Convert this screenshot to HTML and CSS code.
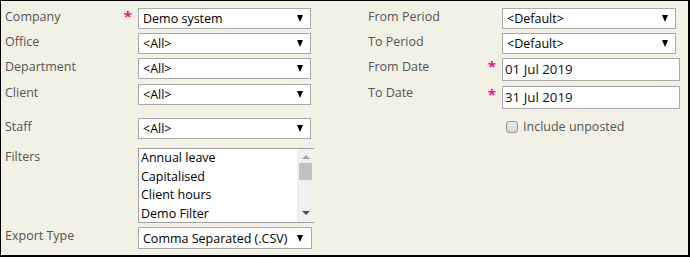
FILE: index.html
```html
<!DOCTYPE html>
<html>
<head>
<meta charset="utf-8">
<link rel="stylesheet" href="styles.css">
</head>
<body>
<div class="panel">
  <div class="form">
    <div class="lbl">Company</div><div class="req">*</div>
    <div class="sel"><span class="val">Demo system</span><span class="arr"></span></div>
    <div class="gap"></div>
    <div class="lbl">From Period</div><div class="req"></div>
    <div class="sel sel-r"><span class="val">&lt;Default&gt;</span><span class="arr"></span></div>

    <div class="lbl">Office</div><div class="req"></div>
    <div class="sel"><span class="val">&lt;All&gt;</span><span class="arr"></span></div>
    <div class="gap"></div>
    <div class="lbl">To Period</div><div class="req"></div>
    <div class="sel sel-r"><span class="val">&lt;Default&gt;</span><span class="arr"></span></div>

    <div class="lbl">Department</div><div class="req"></div>
    <div class="sel"><span class="val">&lt;All&gt;</span><span class="arr"></span></div>
    <div class="gap"></div>
    <div class="lbl">From Date</div><div class="req">*</div>
    <div class="inp"><span class="val">01 Jul 2019</span></div>

    <div class="lbl">Client</div><div class="req"></div>
    <div class="sel"><span class="val">&lt;All&gt;</span><span class="arr"></span></div>
    <div class="gap"></div>
    <div class="lbl">To Date</div><div class="req req-low">*</div>
    <div class="inp inp-low"><span class="val">31 Jul 2019</span></div>

    <div class="lbl">Staff</div><div class="req"></div>
    <div class="sel"><span class="val">&lt;All&gt;</span><span class="arr"></span></div>
    <div class="gap"></div>
    <div class="lbl"></div><div class="req"></div>
    <label class="chk"><span class="box"></span><span>Include unposted</span></label>

    <div class="lbl">Filters</div><div class="req"></div>
    <div class="list">
      <div class="items">
        <div class="item">Annual leave</div>
        <div class="item">Capitalised</div>
        <div class="item">Client hours</div>
        <div class="item">Demo Filter</div>
      </div>
      <div class="sbar">
        <span class="up"></span>
        <span class="thumb"></span>
        <span class="down"></span>
      </div>
    </div>
    <div class="gap"></div>
    <div class="lbl"></div><div class="req"></div><div></div>

    <div class="lbl">Export Type</div><div class="req"></div>
    <div class="sel sel-exp"><span class="val">Comma Separated (.CSV)</span><span class="arr"></span></div>
    <div class="gap"></div>
    <div class="lbl"></div><div class="req"></div><div></div>
  </div>
</div>
</body>
</html>
```

FILE: styles.css
```css
html, body {
  margin: 0;
  padding: 0;
}
body {
  width: 690px;
  height: 257px;
  font-family: "Open Sans", "Liberation Sans", sans-serif;
  font-size: 12.5px;
  background: #f2f1e6;
}
.panel {
  box-sizing: border-box;
  width: 690px;
  height: 257px;
  border-top: 1px solid #000;
  border-left: 1px solid #000;
  border-right: 2px solid #000;
  border-bottom: 2px solid #000;
  background: #f2f1e6;
  padding: 7px 0 0 4px;
}
.form {
  display: grid;
  grid-template-columns: 115px 18px 175px 55px 118px 16px 178px;
  grid-template-rows: 25px 25px 26px 34px 30px 79px 25px;
  align-items: start;
}
.lbl {
  color: #555;
  line-height: 18px;
  white-space: nowrap;
}
.req {
  color: #e5157d;
  font-weight: bold;
  font-size: 15px;
  line-height: 18px;
  text-align: right;
  padding-right: 6px;
  margin-top: -1px;
}
.req-low { margin-top: 1px; }
.sel {
  box-sizing: border-box;
  width: 173px;
  height: 21px;
  background: #fff;
  border: 1px solid #a9a9a9;
  display: flex;
  align-items: center;
  justify-content: space-between;
  padding: 0 7px 0 4px;
  color: #000;
}
.sel .val { line-height: 19px; white-space: nowrap; }
.sel-r { width: 174px; height: 21px; }
.sel-exp { width: 174px; height: 22px; padding-right: 8px; }
.arr {
  width: 0;
  height: 0;
  border-left: 3.5px solid transparent;
  border-right: 3.5px solid transparent;
  border-top: 7px solid #000;
}
.inp {
  box-sizing: border-box;
  width: 178px;
  height: 23px;
  background: #fff;
  border: 1px solid #a9a9a9;
  padding: 0 2px;
  font-size: 13.3px;
  line-height: 21px;
  color: #111;
}
.inp-low { margin-top: 2px; }
.chk {
  display: flex;
  align-items: center;
  gap: 5px;
  color: #555;
  line-height: 18px;
  margin-left: 4px;
  margin-top: 0px;
}
.box {
  box-sizing: border-box;
  width: 12px;
  height: 12px;
  border: 1px solid #9a9a9a;
  border-radius: 3px;
  background: linear-gradient(#e8e8e8, #d8d8d8);
}
.list {
  box-sizing: border-box;
  width: 176px;
  height: 75px;
  background: #fff;
  border-top: 1px solid #a0a0a0;
  border-left: 1px solid #a0a0a0;
  border-bottom: 1px solid #a0a0a0;
  display: flex;
}
.items {
  flex: 1;
  padding: 0 0 0 2px;
  color: #000;
}
.item {
  line-height: 18.5px;
  white-space: nowrap;
}
.sbar {
  width: 17px;
  background: #f0f0f0;
  position: relative;
  display: flex;
  flex-direction: column;
  align-items: center;
}
.up {
  margin-top: 6px;
  width: 0;
  height: 0;
  border-left: 4px solid transparent;
  border-right: 4px solid transparent;
  border-bottom: 4px solid #a3a3a3;
}
.thumb {
  margin-top: 4px;
  width: 13px;
  height: 17px;
  background: #c1c1c1;
}
.down {
  margin-top: auto;
  margin-bottom: 7px;
  width: 0;
  height: 0;
  border-left: 4px solid transparent;
  border-right: 4px solid transparent;
  border-top: 4px solid #505050;
}
```
